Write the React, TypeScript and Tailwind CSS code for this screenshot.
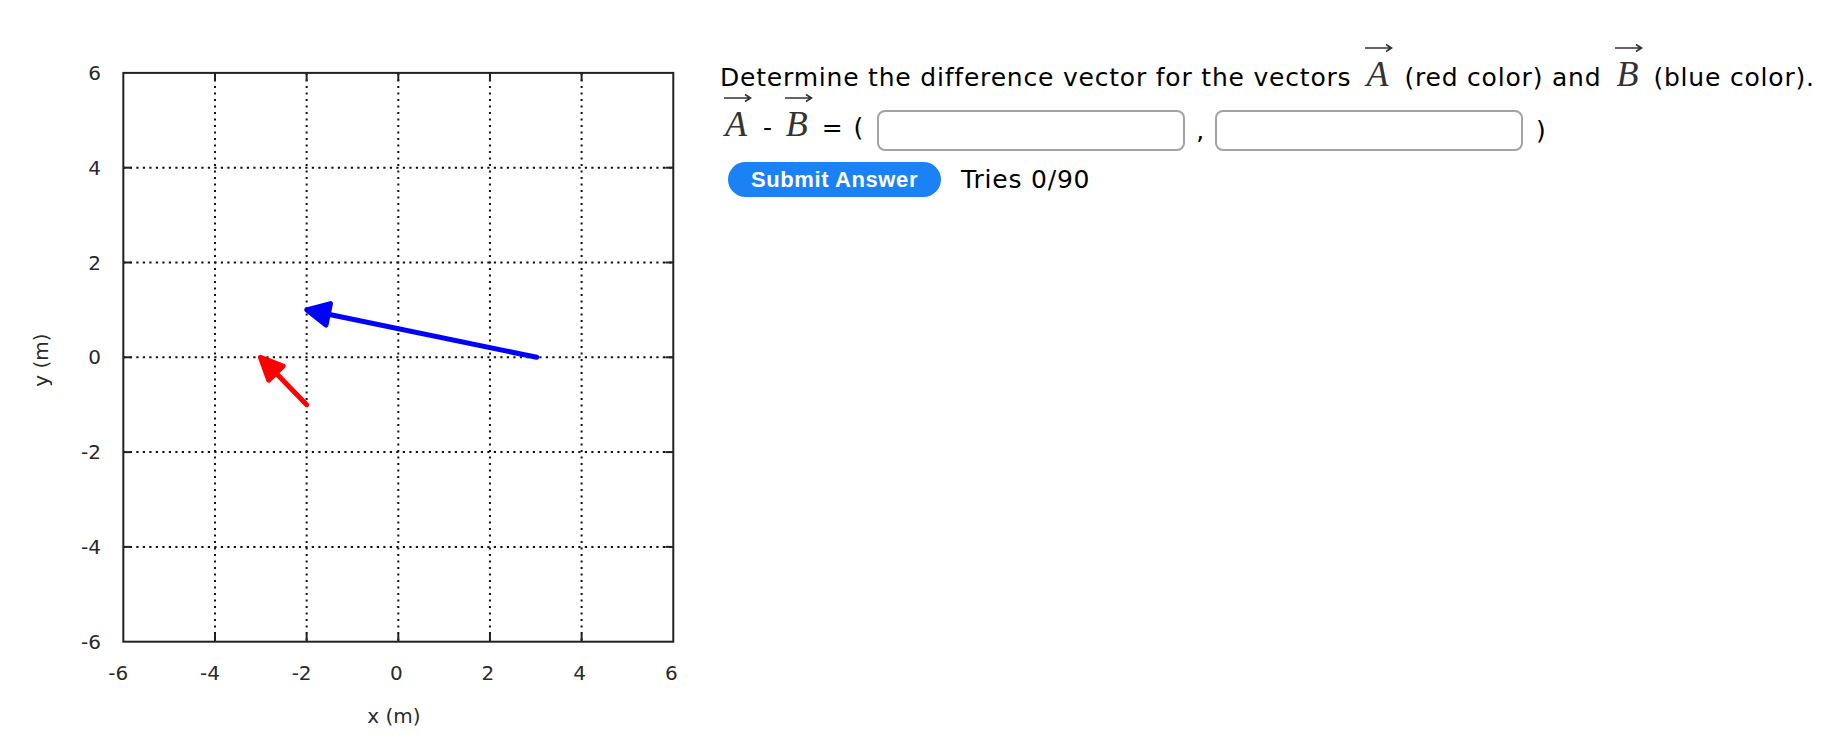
import type { ReactNode } from 'react';

const X = (v: number) => 398.3 + v * 45.83;
const Y = (v: number) => 357.3 - v * 47.4;
const ticks = [-6, -4, -2, 0, 2, 4, 6];
const inner = [-4, -2, 0, 2, 4];

function VectorPlot() {
  const left = X(-6);
  const right = X(6);
  const top = Y(6);
  const bottom = Y(-6);

  return (
    <svg width="700" height="747" viewBox="0 0 700 747" className="shrink-0">
      {/* dotted grid */}
      {inner.map((v) => (
        <g key={`g${v}`} stroke="#111" strokeWidth="2" strokeDasharray="2.2 4.3">
          <line x1={X(v)} y1={top} x2={X(v)} y2={bottom} />
          <line x1={left} y1={Y(v)} x2={right} y2={Y(v)} />
        </g>
      ))}
      {/* ticks on all four sides */}
      {inner.map((v) => (
        <g key={`t${v}`} stroke="#222" strokeWidth="2">
          <line x1={X(v)} y1={bottom} x2={X(v)} y2={bottom - 8} />
          <line x1={X(v)} y1={top} x2={X(v)} y2={top + 8} />
          <line x1={left} y1={Y(v)} x2={left + 8} y2={Y(v)} />
          <line x1={right} y1={Y(v)} x2={right - 8} y2={Y(v)} />
        </g>
      ))}
      <rect x={left} y={top} width={right - left} height={bottom - top} fill="none" stroke="#222" strokeWidth="2" />

      <g fontFamily="'DejaVu Sans', sans-serif" fontSize="20" fill="#2a2a2a">
        {ticks.map((v) => (
          <text key={`x${v}`} x={X(v) - 2 - (v < 0 ? 3 : 0)} y={680} textAnchor="middle">
            {v}
          </text>
        ))}
        {ticks.map((v) => (
          <text key={`y${v}`} x={101} y={Y(v) + 7} textAnchor="end">
            {v}
          </text>
        ))}
        <text x={394} y={723} textAnchor="middle">x (m)</text>
        <text x={47.5} y={360} textAnchor="middle" transform="rotate(-90 47.5 360)">y (m)</text>
      </g>

      {/* vector A (red) from (-2,-1) to (-3,0) */}
      <g stroke="#ff0000" strokeWidth="5" strokeLinecap="round" strokeLinejoin="round" fill="#ff0000">
        <line x1={306.7} y1={404.7} x2={275.9} y2={373.1} />
        <polygon points="260.5,357.3 283.1,366.1 268.7,380.1" />
      </g>
      {/* vector B (blue) from (3,0) to (-2,1) */}
      <g stroke="#0000ff" strokeWidth="5" strokeLinecap="round" strokeLinejoin="round" fill="#0000ff">
        <line x1={536.7} y1={357.3} x2={328.3} y2={314.3} />
        <polygon points="306.7,309.9 330.5,303.6 326,325.1" />
      </g>
    </svg>
  );
}

function Vec({ children }: { children: ReactNode }) {
  return (
    <span className="relative inline-block w-[32px] text-center font-['Liberation_Serif',serif] text-[36px] italic leading-none tracking-normal text-[#333]">
      <svg className="absolute -top-[13px] left-[3px]" width="29" height="10" viewBox="0 0 29 10">
        <path d="M1 5H27M22 1.5L27.5 5L22 8.5" stroke="#333" strokeWidth="1.6" fill="none" />
      </svg>
      {children}
    </span>
  );
}

export default function App() {
  return (
    <div className="flex h-[747px] w-full bg-white">
      <VectorPlot />
      <div className="pl-[20px] pt-[56px] font-['DejaVu_Sans',Verdana,sans-serif] text-[25px] leading-none tracking-[0.8px] text-black">
        <div className="flex items-baseline whitespace-nowrap">
          <span>Determine the difference vector for the vectors</span>
          <span className="ml-[10px]"><Vec>A</Vec></span>
          <span className="ml-[11px]">(red color) and</span>
          <span className="ml-[10px]"><Vec>B</Vec></span>
          <span className="ml-[10px]">(blue color).</span>
        </div>

        <div className="mt-[14px] flex items-center">
          <div className="mb-[12px] flex items-baseline">
            <Vec>A</Vec>
            <span className="ml-[11px]">-</span>
            <span className="ml-[8px]"><Vec>B</Vec></span>
            <span className="ml-[9px]">=</span>
            <span className="ml-[10px]">(</span>
          </div>
          <input type="text" aria-label="x component" className="ml-[13px] h-[41px] w-[308px] rounded-[8px] border-2 border-[#a3a3a3] bg-white px-2 outline-none" />
          <span className="ml-[11px]">,</span>
          <input type="text" aria-label="y component" className="ml-[10px] h-[41px] w-[308px] rounded-[8px] border-2 border-[#a3a3a3] bg-white px-2 outline-none" />
          <span className="ml-[13px]">)</span>
        </div>

        <div className="mt-[8px] flex items-center">
          <button className="ml-[8px] h-[35px] w-[213px] rounded-full bg-[#1a82f5] font-['Liberation_Sans',Arial,sans-serif] text-[22px] font-bold tracking-[0.6px] text-white">
            Submit Answer
          </button>
          <span className="ml-[20px]">Tries 0/90</span>
        </div>
      </div>
    </div>
  );
}
